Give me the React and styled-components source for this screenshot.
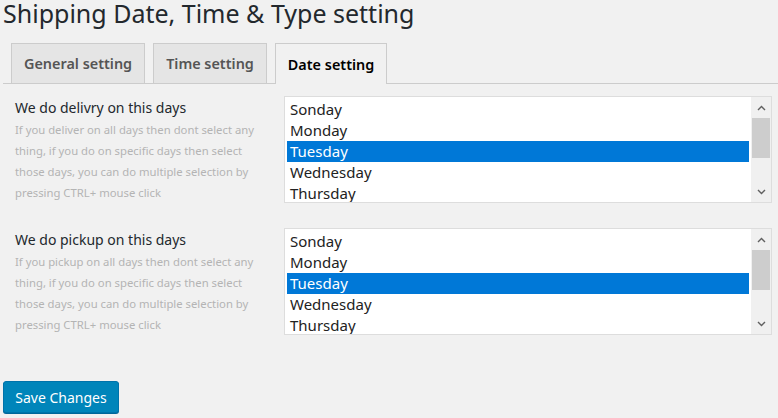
import styled, { createGlobalStyle } from "styled-components";

const DAYS = ["Sonday", "Monday", "Tuesday", "Wednesday", "Thursday", "Friday", "Saturday"];

const ROWS = [
  {
    label: "We do delivry on this days",
    help: "If you deliver on all days then dont select any thing, if you do on specific days then select those days, you can do multiple selection by pressing CTRL+ mouse click",
  },
  {
    label: "We do pickup on this days",
    help: "If you pickup on all days then dont select any thing, if you do on specific days then select those days, you can do multiple selection by pressing CTRL+ mouse click",
  },
];

export default function App() {
  return (
    <>
      <GlobalStyle />
      <Wrap>
        <Title>Shipping Date, Time &amp; Type setting</Title>
        <TabBar>
          <Tab>General setting</Tab>
          <Tab>Time setting</Tab>
          <Tab active>Date setting</Tab>
        </TabBar>
        <Form>
          {ROWS.map((row) => (
            <Row key={row.label}>
              <LabelCol>
                <Label>{row.label}</Label>
                <Help>{row.help}</Help>
              </LabelCol>
              <ListBox>
                <Options>
                  {DAYS.map((d) => (
                    <Option key={d} selected={d === "Tuesday"}>
                      {d}
                    </Option>
                  ))}
                </Options>
                <Scrollbar>
                  <ScrollButton>
                    <svg width="9" height="6" viewBox="0 0 9 6">
                      <polyline points="1,5 4.5,1.5 8,5" fill="none" stroke="#606060" strokeWidth="1.4" />
                    </svg>
                  </ScrollButton>
                  <Track>
                    <Thumb />
                  </Track>
                  <ScrollButton>
                    <svg width="9" height="6" viewBox="0 0 9 6">
                      <polyline points="1,1 4.5,4.5 8,1" fill="none" stroke="#606060" strokeWidth="1.4" />
                    </svg>
                  </ScrollButton>
                </Scrollbar>
              </ListBox>
            </Row>
          ))}
        </Form>
        <SaveButton>Save Changes</SaveButton>
      </Wrap>
    </>
  );
}

const GlobalStyle = createGlobalStyle`
  body {
    margin: 0;
    background: #f1f1f1;
    font-family: "Noto Sans", "Open Sans", sans-serif;
    color: #23282d;
  }
`;

const Wrap = styled.div`
  padding: 0 0 0 3px;
  width: 775px;
  height: 418px;
  overflow: hidden;
`;

const Title = styled.h1`
  margin: 0;
  font-size: 25px;
  font-weight: 400;
  line-height: 26px;
  color: #23282d;
  white-space: nowrap;
`;

const TabBar = styled.div`
  display: flex;
  gap: 8px;
  margin-top: 17px;
  padding-left: 8px;
  border-bottom: 1px solid #ccc;
  height: 41px;
  box-sizing: border-box;
  align-items: flex-end;
`;

const Tab = styled.div`
  box-sizing: border-box;
  height: ${(props) => (props.active ? "41px" : "40px")};
  margin-bottom: ${(props) => (props.active ? "-1px" : "0")};
  padding: 0 12px;
  display: flex;
  align-items: center;
  border: 1px solid #ccc;
  border-bottom: none;
  background: ${(props) => (props.active ? "#f1f1f1" : "#e5e5e5")};
  color: ${(props) => (props.active ? "#000" : "#555")};
  font-size: 14.4px;
  font-weight: 600;
`;

const Form = styled.div`
  display: flex;
  flex-direction: column;
  gap: 25px;
  padding: 12px 0 0 12px;
`;

const Row = styled.div`
  display: flex;
  align-items: flex-start;
`;

const LabelCol = styled.div`
  width: 269px;
  padding-top: 2px;
`;

const Label = styled.div`
  font-size: 14px;
  line-height: 20px;
  color: #23282d;
`;

const Help = styled.p`
  margin: 1px 0 0;
  width: 255px;
  font-size: 11.3px;
  line-height: 21px;
  color: #b4b4b4;
`;

const ListBox = styled.div`
  box-sizing: border-box;
  width: 488px;
  height: 107px;
  border: 1px solid #ddd;
  background: #fff;
  display: flex;
`;

const Options = styled.div`
  flex: 1;
  padding: 2px 2px 0 2px;
  overflow: hidden;
`;

const Option = styled.div`
  height: 21px;
  line-height: 21px;
  padding-left: 3px;
  font-size: 15px;
  background: ${(props) => (props.selected ? "#0078d7" : "transparent")};
  color: ${(props) => (props.selected ? "#fff" : "#222")};
  white-space: nowrap;
`;

const Scrollbar = styled.div`
  width: 20px;
  background: #f0f0f0;
  display: flex;
  flex-direction: column;
`;

const ScrollButton = styled.div`
  height: 21px;
  display: flex;
  align-items: center;
  justify-content: center;
`;

const Track = styled.div`
  flex: 1;
`;

const Thumb = styled.div`
  height: 40px;
  margin: 0 1px;
  background: #cdcdcd;
`;

const SaveButton = styled.button`
  margin-top: 46px;
  box-sizing: border-box;
  width: 116px;
  height: 32px;
  border: 1px solid #0073aa;
  border-radius: 3px;
  background: #0085ba;
  box-shadow: 0 1px 0 #006799;
  color: #fff;
  font-family: "Noto Sans", "Open Sans", sans-serif;
  font-size: 14px;
  padding: 0;
  cursor: pointer;
`;
